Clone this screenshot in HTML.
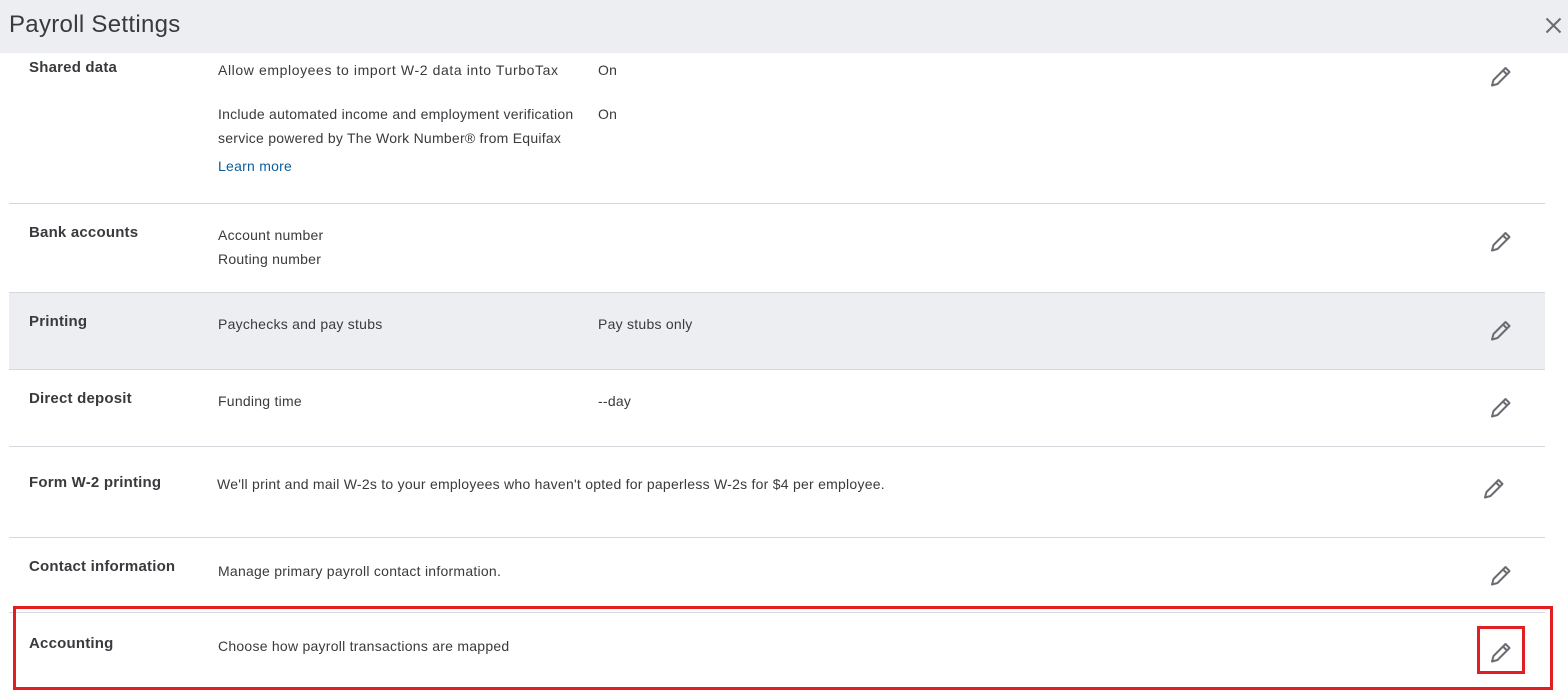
<!DOCTYPE html><html><head><style>
body{margin:0;width:1568px;height:692px;overflow:hidden;background:#fff;font-family:"Liberation Sans",sans-serif;color:#393a3d;position:relative}
.hdr{position:absolute;left:0;top:0;width:1568px;height:53px;background:#eceef1}
.hdr h1{position:absolute;left:9px;top:11px;margin:0;font-weight:normal;font-size:24px;letter-spacing:0.3px;color:#393a3d}
.x{position:absolute;left:1545px;top:17px}
.t{position:absolute;font-size:14px;letter-spacing:0.25px;white-space:nowrap}
.b{position:absolute;font-size:15px;font-weight:bold;left:29px;letter-spacing:0.2px}
.l{position:absolute;left:9px;width:1536px;height:1px;background:#d4d7dc}
.p{position:absolute;width:24px;height:24px}
</style></head><body>
<div class="hdr"><h1>Payroll Settings</h1>
<svg class="x" width="17" height="17" viewBox="0 0 17 17"><path d="M1.5 1.5L15.5 15.5M15.5 1.5L1.5 15.5" stroke="#6b6c72" stroke-width="2"/></svg></div>
<div style="position:absolute;left:9px;top:293px;width:1536px;height:76px;background:#eceef1"></div>
<div class="b" style="top:59px">Shared data</div>
<div class="t" style="left:218px;top:62px;letter-spacing:0.6px">Allow employees to import W-2 data into TurboTax</div>
<div class="t" style="left:598px;top:62px">On</div>
<div class="t" style="left:218px;top:106px">Include automated income and employment verification</div>
<div class="t" style="left:218px;top:130px">service powered by The Work Number® from Equifax</div>
<div class="t" style="left:598px;top:106px">On</div>
<div class="t" style="left:218px;top:158px;color:#0d5e9c">Learn more</div>
<div class="l" style="top:203px"></div>
<div class="b" style="top:224px">Bank accounts</div>
<div class="t" style="left:218px;top:227px">Account number</div>
<div class="t" style="left:218px;top:251px">Routing number</div>
<div class="l" style="top:292px"></div>
<div class="b" style="top:313px">Printing</div>
<div class="t" style="left:218px;top:316px">Paychecks and pay stubs</div>
<div class="t" style="left:598px;top:316px">Pay stubs only</div>
<div class="l" style="top:369px"></div>
<div class="b" style="top:390px">Direct deposit</div>
<div class="t" style="left:218px;top:393px">Funding time</div>
<div class="t" style="left:598px;top:393px">--day</div>
<div class="l" style="top:446px"></div>
<div class="b" style="top:474px">Form W-2 printing</div>
<div class="t" style="left:217px;top:476px">We'll print and mail W-2s to your employees who haven't opted for paperless W-2s for $4 per employee.</div>
<div class="l" style="top:537px"></div>
<div class="b" style="top:558px">Contact information</div>
<div class="t" style="left:218px;top:563px">Manage primary payroll contact information.</div>
<div class="l" style="top:612px"></div>
<div class="b" style="top:635px">Accounting</div>
<div class="t" style="left:218px;top:638px">Choose how payroll transactions are mapped</div>
<div style="position:absolute;left:13px;top:606px;width:1534px;height:78px;border:3px solid #e01e23"></div>
<div style="position:absolute;left:1477px;top:626px;width:42px;height:42px;border:3px solid #e01e23"></div>
<svg width="0" height="0" style="position:absolute"><defs><symbol id="pen" viewBox="0 0 24 24"><path d="M16.5 3l4 4L8.5 19l-5.5 1.5L4.5 15Z M14 5.5l4 4" fill="none" stroke="#6b6c72" stroke-width="2" stroke-linejoin="round"/></symbol></defs></svg>
<svg class="p" style="left:1489px;top:65px"><use href="#pen"/></svg>
<svg class="p" style="left:1489px;top:230px"><use href="#pen"/></svg>
<svg class="p" style="left:1489px;top:319px"><use href="#pen"/></svg>
<svg class="p" style="left:1489px;top:396px"><use href="#pen"/></svg>
<svg class="p" style="left:1482px;top:477px"><use href="#pen"/></svg>
<svg class="p" style="left:1489px;top:564px"><use href="#pen"/></svg>
<svg class="p" style="left:1489px;top:641px"><use href="#pen"/></svg>
</body></html>
